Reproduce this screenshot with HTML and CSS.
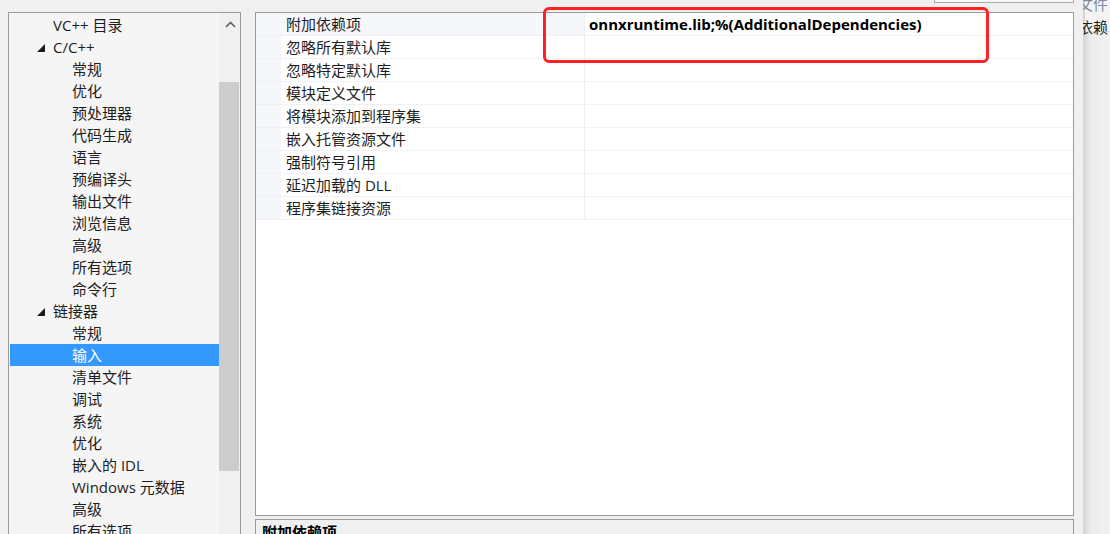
FILE: index.html
```html
<!DOCTYPE html>
<html lang="zh-CN">
<head>
<meta charset="utf-8">
<title>属性页</title>
<link rel="stylesheet" href="styles.css">
</head>
<body>
<div class="page">
  <div class="tree-panel">
    <div class="tree">
      <div class="node l1"><span class="tog"></span>VC++ 目录</div>
      <div class="node l1"><span class="tog"><svg width="8" height="8" viewBox="0 0 8 8"><polygon points="8,0 8,8 0,8" fill="#1e1e1e"/></svg></span>C/C++</div>
      <div class="node l2">常规</div>
      <div class="node l2">优化</div>
      <div class="node l2">预处理器</div>
      <div class="node l2">代码生成</div>
      <div class="node l2">语言</div>
      <div class="node l2">预编译头</div>
      <div class="node l2">输出文件</div>
      <div class="node l2">浏览信息</div>
      <div class="node l2">高级</div>
      <div class="node l2">所有选项</div>
      <div class="node l2">命令行</div>
      <div class="node l1"><span class="tog"><svg width="8" height="8" viewBox="0 0 8 8"><polygon points="8,0 8,8 0,8" fill="#1e1e1e"/></svg></span>链接器</div>
      <div class="node l2">常规</div>
      <div class="node l2 sel">输入</div>
      <div class="node l2">清单文件</div>
      <div class="node l2">调试</div>
      <div class="node l2">系统</div>
      <div class="node l2">优化</div>
      <div class="node l2">嵌入的 IDL</div>
      <div class="node l2">Windows 元数据</div>
      <div class="node l2">高级</div>
      <div class="node l2">所有选项</div>
    </div>
    <div class="vscroll">
      <div class="arrow"><svg width="11" height="7" viewBox="0 0 11 7"><polyline points="1,6 5.5,1.5 10,6" fill="none" stroke="#606060" stroke-width="1.6"/></svg></div>
      <div class="thumb"></div>
    </div>
  </div>

  <div class="main">
    <div class="topbar"><div class="topfield"></div></div>
    <div class="grid">
      <div class="row first"><div class="gut"></div><div class="name">附加依赖项</div><div class="val bold">onnxruntime.lib;%(AdditionalDependencies)</div></div>
      <div class="row"><div class="gut"></div><div class="name">忽略所有默认库</div><div class="val"></div></div>
      <div class="row"><div class="gut"></div><div class="name">忽略特定默认库</div><div class="val"></div></div>
      <div class="row"><div class="gut"></div><div class="name">模块定义文件</div><div class="val"></div></div>
      <div class="row"><div class="gut"></div><div class="name">将模块添加到程序集</div><div class="val"></div></div>
      <div class="row"><div class="gut"></div><div class="name">嵌入托管资源文件</div><div class="val"></div></div>
      <div class="row"><div class="gut"></div><div class="name">强制符号引用</div><div class="val"></div></div>
      <div class="row"><div class="gut"></div><div class="name">延迟加载的 DLL</div><div class="val"></div></div>
      <div class="row"><div class="gut"></div><div class="name">程序集链接资源</div><div class="val"></div></div>
      <div class="highlight"></div>
    </div>
    <div class="desc"><div class="desc-title">附加依赖项</div></div>
  </div>

  <div class="side">
    <div class="side-top">
      <div class="side-t1">文件</div>
      <div class="side-t2">依赖</div>
    </div>
  </div>
</div>
</body>
</html>
```

FILE: styles.css
```css
* { box-sizing: border-box; }
html, body { margin: 0; padding: 0; }
body {
  width: 1110px;
  height: 534px;
  overflow: hidden;
  background: #f0f0f0;
  font-family: "Open Sans", "Noto Sans CJK SC", sans-serif;
  font-size: 15px;
  color: #1e1e1e;
}
.page {
  display: flex;
  align-items: flex-start;
  height: 534px;
  overflow: hidden;
}

/* left tree */
.tree-panel {
  margin-left: 8px;
  margin-top: 12px;
  width: 233px;
  height: 522px;
  overflow: hidden;
  border: 1px solid #9a9a9a;
  border-bottom: none;
  background: #f5f5f5;
  display: flex;
}
.tree {
  flex: 1;
  padding: 1px 0 0 1px;
}
.node {
  height: 22px;
  line-height: 22px;
  display: flex;
  align-items: center;
  white-space: nowrap;
}
.node.l1 { padding-left: 25px; }
.node.l2 { padding-left: 62px; }
.tog {
  width: 18px;
  height: 22px;
  display: flex;
  align-items: center;
  padding-left: 2px;
  padding-top: 1px;
}
.node.sel { background: #3399ff; color: #fff; }
.vscroll {
  width: 21px;
  background: #f0f0f0;
  display: flex;
  flex-direction: column;
}
.arrow {
  height: 69px;
  display: flex;
  justify-content: center;
  padding-top: 8px;
  padding-left: 1px;
}
.thumb {
  height: 389px;
  background: #cdcdcd;
  margin-right: 1px;
}

/* main */
.main {
  margin-left: 14px;
  width: 819px;
  height: 534px;
  overflow: hidden;
  display: flex;
  flex-direction: column;
}
.topbar {
  height: 12px;
  flex: none;
  display: flex;
  justify-content: flex-end;
}
.topfield {
  width: 140px;
  height: 3px;
  border: 1px solid #a8a8a8;
  border-top: none;
  background: #f8f8f8;
}
.grid {
  position: relative;
  flex: none;
  height: 504px;
  border: 1px solid #9a9a9a;
  background: #fff;
}
.row {
  display: flex;
  height: 23px;
  border-bottom: 1px solid #f0f1f5;
}
.gut {
  width: 25px;
  background: #f5f7fb;
}
.name {
  width: 304px;
  padding-left: 5px;
  line-height: 22px;
  white-space: nowrap;
  border-right: 1px solid #f0f1f5;
}
.row.first .name { background: #f5f7fb; }
.val {
  flex: 1;
  padding-left: 4px;
  line-height: 22px;
  white-space: nowrap;
}
.val.bold { font-weight: 700; color: #000; }
.highlight {
  position: absolute;
  left: 287px;
  top: -6px;
  width: 446px;
  height: 56px;
  border: 3px solid #ff2222;
  border-radius: 6px;
}
.desc {
  margin-top: 3px;
  flex: none;
  height: 40px;
  border: 1px solid #9a9a9a;
  background: #f0f0f0;
  padding: 2px 0 0 6px;
}
.desc-title { font-weight: 700; line-height: 20px; color: #000; }

/* side window */
.side {
  margin-left: 9px;
  width: 27px;
  height: 534px;
  overflow: hidden;
  background: linear-gradient(to right, #d4d4d4, #ececec 8px, #f2f2f2);
}
.side-top {
  height: 38px;
  background: #f4f4f4;
  border-bottom: 1px solid #e2e2e2;
  margin-left: 2px;
}
.side-t1 {
  margin-left: -7px;
  margin-top: -6px;
  line-height: 20px;
  color: #7a8aa0;
  white-space: nowrap;
}
.side-t2 {
  margin-left: -7px;
  margin-top: 2px;
  line-height: 22px;
  color: #1e1e1e;
  white-space: nowrap;
}
```
